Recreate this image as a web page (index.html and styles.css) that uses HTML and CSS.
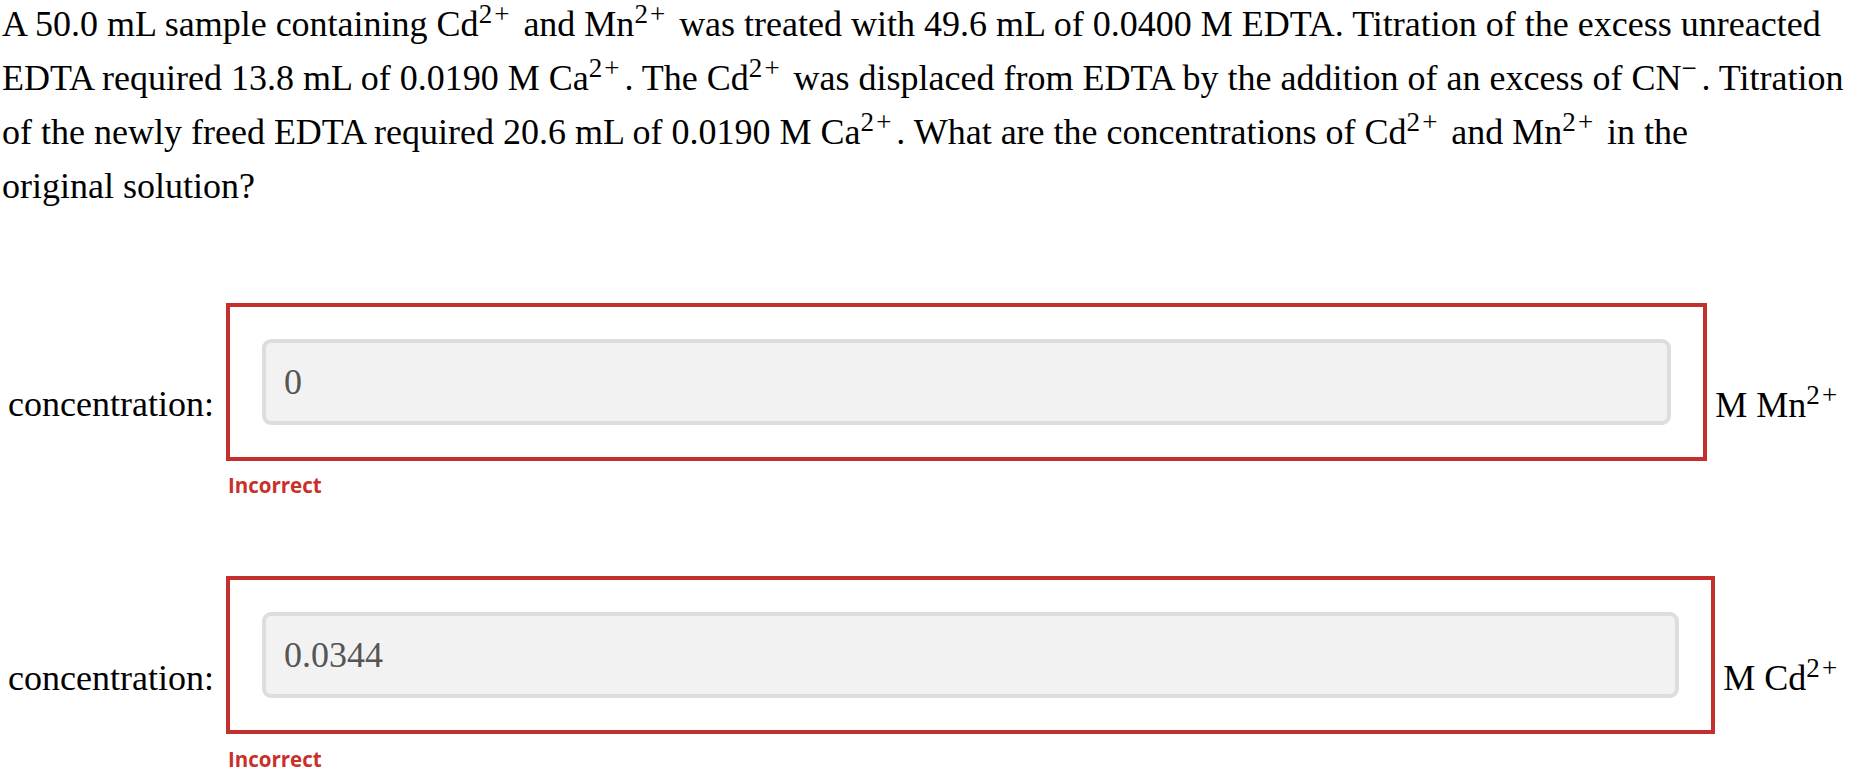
FILE: index.html
```html
<!DOCTYPE html>
<html>
<head>
<meta charset="utf-8">
<link rel="stylesheet" href="styles.css">
</head>
<body>
<div class="page">
  <p class="question">A 50.0 mL sample containing Cd<sup>2+</sup> and Mn<sup>2+</sup> was treated with 49.6 mL of 0.0400 M EDTA. Titration of the excess unreacted EDTA required 13.8 mL of 0.0190 M Ca<sup>2+</sup>. The Cd<sup>2+</sup> was displaced from EDTA by the addition of an excess of CN<sup>−</sup>. Titration of the newly freed EDTA required 20.6 mL of 0.0190 M Ca<sup>2+</sup>. What are the concentrations of Cd<sup>2+</sup> and Mn<sup>2+</sup> in the<br>original solution?</p>

  <div class="answer first">
    <label class="label">concentration:</label>
    <div class="box"><input class="field" type="text" value="0" readonly></div>
    <span class="unit">M Mn<sup>2+</sup></span>
    <div class="feedback">Incorrect</div>
  </div>

  <div class="answer second">
    <label class="label">concentration:</label>
    <div class="box"><input class="field" type="text" value="0.0344" readonly></div>
    <span class="unit">M Cd<sup>2+</sup></span>
    <div class="feedback">Incorrect</div>
  </div>
</div>
</body>
</html>
```

FILE: styles.css
```css
html, body {
  margin: 0;
  padding: 0;
  background: #ffffff;
}

body {
  font-family: "Liberation Serif", "Times New Roman", serif;
  font-size: 36px;
  line-height: 1.5;
  color: #000000;
  overflow: hidden;
}

.page {
  width: 1864px;
  height: 780px;
}

.question {
  margin: -3.5px 0 0 0;
  padding-left: 2px;
  width: 1862px;
}

sup {
  font-size: 0.75em;
  vertical-align: super;
  line-height: 1;
  letter-spacing: 0.08em;
  padding-right: 0.1em;
}

.answer {
  display: grid;
  grid-template-columns: auto 1fr auto;
  align-items: end;
  width: 1834px;
  margin-left: 8px;
}

.answer.first {
  margin-top: 90px;
}

.answer.second {
  margin-top: 77px;
}

.label {
  margin-right: 12px;
  margin-bottom: 29.5px;
}

.box {
  border: 4px solid #c4302e;
  padding: 32px;
}

.field {
  display: block;
  box-sizing: border-box;
  width: 100%;
  height: 86px;
  margin: 0;
  border: 4px solid #dddddd;
  border-radius: 9px;
  background: #f2f2f2;
  padding: 0 18px;
  font-family: "Liberation Serif", "Times New Roman", serif;
  font-size: 36px;
  color: #555555;
  outline: none;
}

.unit {
  margin-left: 8px;
  margin-bottom: 29px;
  white-space: nowrap;
}

.feedback {
  grid-column: 2;
  margin-top: 10.5px;
  font-family: "Open Sans", "Noto Sans", sans-serif;
  font-weight: 700;
  font-size: 20.5px;
  line-height: normal;
  color: #c9302c;
  padding-left: 2px;
}
```
